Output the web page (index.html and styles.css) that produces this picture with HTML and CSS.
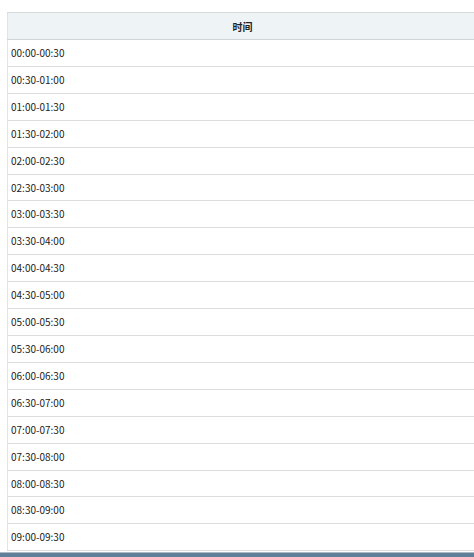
FILE: index.html
```html
<!DOCTYPE html>
<html lang="zh">
<head>
<meta charset="utf-8">
<link rel="stylesheet" href="styles.css">
</head>
<body>
<div class="wrap">
<table class="grid">
<thead><tr><th>时间</th></tr></thead>
<tbody>
<tr><td>00:00-00:30</td></tr>
<tr><td>00:30-01:00</td></tr>
<tr><td>01:00-01:30</td></tr>
<tr><td>01:30-02:00</td></tr>
<tr><td>02:00-02:30</td></tr>
<tr><td>02:30-03:00</td></tr>
<tr><td>03:00-03:30</td></tr>
<tr><td>03:30-04:00</td></tr>
<tr><td>04:00-04:30</td></tr>
<tr><td>04:30-05:00</td></tr>
<tr><td>05:00-05:30</td></tr>
<tr><td>05:30-06:00</td></tr>
<tr><td>06:00-06:30</td></tr>
<tr><td>06:30-07:00</td></tr>
<tr><td>07:00-07:30</td></tr>
<tr><td>07:30-08:00</td></tr>
<tr><td>08:00-08:30</td></tr>
<tr><td>08:30-09:00</td></tr>
<tr><td>09:00-09:30</td></tr>
</tbody>
</table>
</div>
<div class="bar"></div>
</body>
</html>
```
FILE: styles.css
```css
html, body {
  margin: 0;
  padding: 0;
  background: #fff;
  overflow: hidden;
}
body {
  font-family: "Noto Sans CJK SC", "Noto Sans", sans-serif;
  font-size: 10px;
  color: #222;
  height: 557px;
  position: relative;
}
.wrap {
  padding: 12px 0 0 7px;
}
.grid {
  border-collapse: collapse;
  width: 470px;
}
.grid th {
  height: 26px;
  padding: 0;
  background: #eef3f6;
  border-top: 1px solid #d6dadb;
  border-bottom: 1px solid #d0d4d4;
  border-left: 1px solid #e2e4e4;
  font-weight: bold;
  text-align: center;
  font-size: 10px;
  line-height: 25px;
}
.grid td {
  height: 25.9px;
  padding: 0 0 0 3px;
  border-bottom: 1px solid #dcdcdc;
  border-left: 1px solid #e4e4e4;
  line-height: 25.9px;
  white-space: nowrap;
}
.bar {
  position: absolute;
  left: 0;
  right: 0;
  bottom: 0;
  height: 4px;
  background: #5e7f96;
  border-top: 1px solid #a9bac6;
}
```
